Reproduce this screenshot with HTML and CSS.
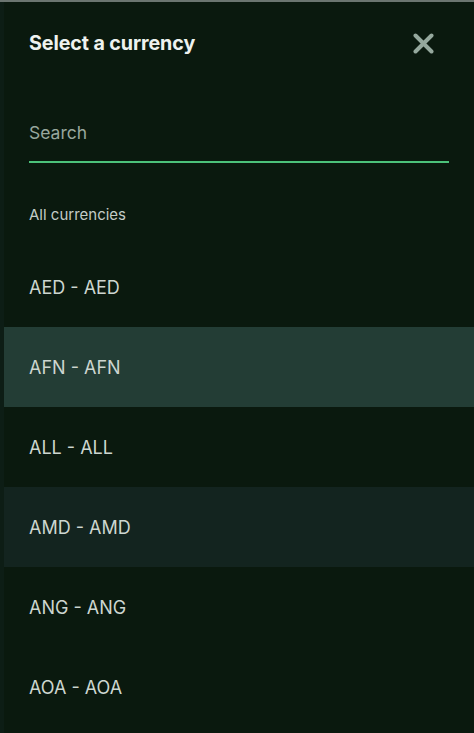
FILE: index.html
```html
<!DOCTYPE html>
<html lang="en">
<head>
<meta charset="utf-8">
<title>Select a currency</title>
<link rel="stylesheet" href="styles.css">
</head>
<body>
<div class="topline"></div>
<div class="page">
  <div class="panel">
    <div class="header">
      <h1 class="title">Select a currency</h1>
      <button class="close" aria-label="Close">
        <svg width="21" height="21" viewBox="0 0 21 21"><path d="M2.5 2.5 L18.5 18.5 M18.5 2.5 L2.5 18.5" stroke="#95a89d" stroke-width="4" stroke-linecap="round"/></svg>
      </button>
    </div>
    <div class="search">
      <input class="search-input" type="text" placeholder="Search">
    </div>
    <div class="section">All currencies</div>
    <ul class="list">
      <li class="item">AED - AED</li>
      <li class="item item-active">AFN - AFN</li>
      <li class="item">ALL - ALL</li>
      <li class="item item-hover">AMD - AMD</li>
      <li class="item">ANG - ANG</li>
      <li class="item">AOA - AOA</li>
    </ul>
  </div>
</div>
</body>
</html>
```

FILE: styles.css
```css
html, body {
  margin: 0;
  padding: 0;
  height: 100%;
  overflow: hidden;
}
body {
  background: #0d1d15;
  font-family: "Inter", "Noto Sans", sans-serif;
}
.topline {
  height: 2px;
  background: #6b7570;
}
.page {
  display: flex;
  height: calc(100% - 2px);
}
.panel {
  flex: 1;
  margin-left: 4px;
  background: #0a190e;
  display: flex;
  flex-direction: column;
  overflow: hidden;
}
.panel > * {
  flex-shrink: 0;
}
.header {
  display: flex;
  align-items: center;
  justify-content: space-between;
  padding: 0 40px 0 25px;
  height: 82px;
}
.title {
  margin: 0;
  color: #eef2ef;
  font-size: 19.7px;
  font-weight: 700;
  letter-spacing: -0.1px;
}
.close {
  background: none;
  border: none;
  padding: 0;
  width: 21px;
  height: 21px;
  display: flex;
}
.search {
  padding: 0 25px;
}
.search-input {
  width: 100%;
  box-sizing: border-box;
  background: transparent;
  border: none;
  border-bottom: 2px solid #4cc27a;
  padding: 38px 0 18px;
  font-family: inherit;
  font-size: 17.5px;
  color: #dfe7e1;
  outline: none;
}
.search-input::placeholder {
  color: #98a79d;
}
.section {
  padding: 0 25px;
  margin-top: 42px;
  height: 20px;
  line-height: 20px;
  font-size: 15px;
  color: #c3ccc6;
}
.list {
  list-style: none;
  margin: 22px 0 0;
  padding: 0;
}
.item {
  height: 80px;
  display: flex;
  align-items: center;
  padding: 0 25px;
  font-size: 18px;
  color: #cdd6d0;
}
.item-active {
  background: #233d35;
}
.item-hover {
  background: #13241f;
}
```
